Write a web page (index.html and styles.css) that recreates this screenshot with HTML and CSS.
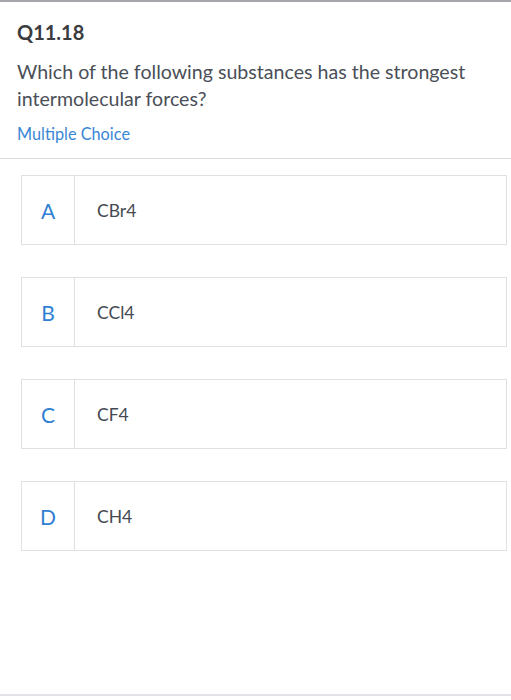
FILE: index.html
```html
<!DOCTYPE html>
<html>
<head>
<meta charset="utf-8">
<link rel="stylesheet" href="styles.css">
</head>
<body>
<div class="page">
  <header class="head">
    <h1 class="qnum">Q11.18</h1>
    <p class="qtext">Which of the following substances has the strongest intermolecular forces?</p>
    <div class="qtype">Multiple Choice</div>
  </header>
  <div class="options">
    <div class="opt"><div class="letter">A</div><div class="answer">CBr4</div></div>
    <div class="opt"><div class="letter">B</div><div class="answer">CCl4</div></div>
    <div class="opt"><div class="letter">C</div><div class="answer">CF4</div></div>
    <div class="opt"><div class="letter">D</div><div class="answer">CH4</div></div>
  </div>
  <div class="bottom"></div>
</div>
</body>
</html>
```
FILE: styles.css
```css
html, body {
  margin: 0;
  padding: 0;
  background: #fff;
}
body {
  font-family: Lato, "Open Sans", sans-serif;
  width: 511px;
  height: 700px;
  overflow: hidden;
}
.page {
  height: 700px;
  display: flex;
  flex-direction: column;
  border-top: 2px solid #a4a6a9;
  box-sizing: border-box;
}
.head {
  padding: 18px 0 0 17px;
  border-bottom: 1px solid #dcdde0;
  height: 157px;
  box-sizing: border-box;
}
.qnum {
  margin: 0;
  font-size: 20px;
  font-weight: 700;
  color: #3a3c40;
  line-height: 24px;
}
.qtext {
  margin: 14px 0 0 0;
  font-size: 19.6px;
  line-height: 27px;
  color: #4a4f58;
  width: 480px;
}
.qtype {
  margin-top: 12px;
  font-size: 16.3px;
  line-height: 20px;
  color: #3a86d6;
}
.options {
  padding: 16px 4px 0 21px;
  display: flex;
  flex-direction: column;
  gap: 32px;
}
.opt {
  display: flex;
  height: 70px;
  border: 1px solid #dfe0e3;
  box-sizing: border-box;
}
.letter {
  width: 52px;
  border-right: 1px solid #dfe0e3;
  display: flex;
  align-items: center;
  justify-content: center;
  font-size: 21px;
  color: #2f7fd3;
}
.answer {
  display: flex;
  align-items: center;
  padding-left: 22px;
  font-size: 17.5px;
  color: #454a52;
}
.bottom {
  margin-top: auto;
  margin-bottom: 4px;
  border-bottom: 2px solid #e2e3e6;
}
```
